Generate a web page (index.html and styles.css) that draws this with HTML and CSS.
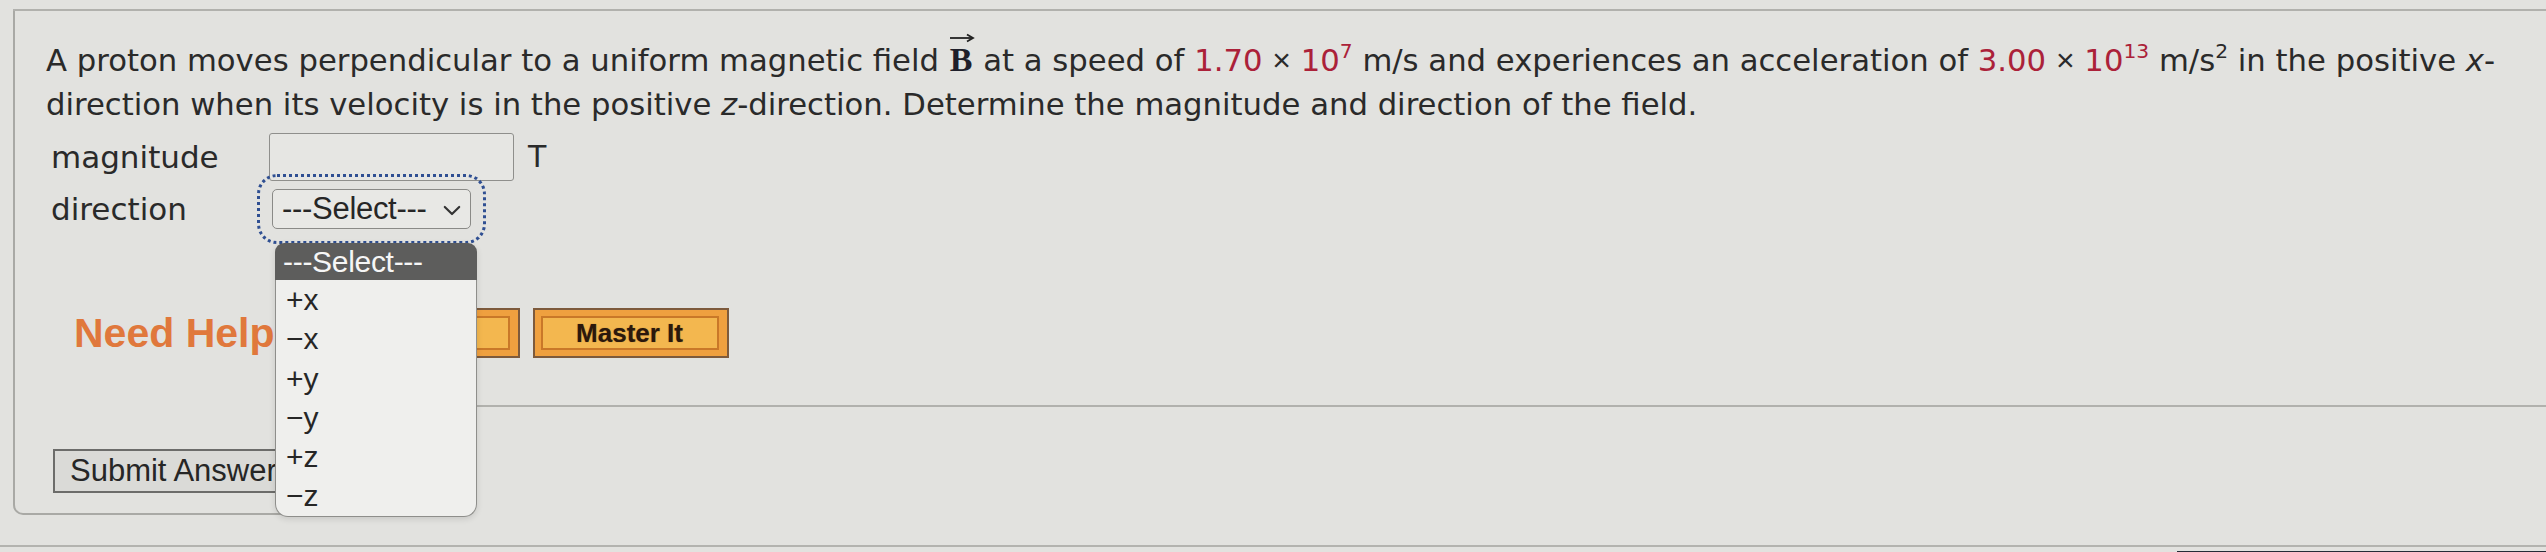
FILE: index.html
```html
<!DOCTYPE html>
<html lang="en">
<head>
<meta charset="utf-8">
<title>Proton in magnetic field</title>
<link rel="stylesheet" href="styles.css">
</head>
<body>
<div class="frame">
  <div class="upper">
    <p class="question">A proton moves perpendicular to a uniform magnetic field <span class="vec">B<svg class="vec-arrow" viewBox="0 0 26 10" width="26" height="10"><path d="M1 5 H23" stroke="#222" stroke-width="1.8" fill="none"/><path d="M18 1.5 L24 5 L18 8.5" stroke="#222" stroke-width="1.8" fill="none"/></svg></span> at a speed of <span class="num">1.70</span> <span class="times">×</span> <span class="num">10<sup>7</sup></span> m/s and experiences an acceleration of <span class="num">3.00</span> <span class="times">×</span> <span class="num">10<sup>13</sup></span> m/s<sup>2</sup> in the positive <i class="var">x</i>-<br>direction when its velocity is in the positive <i class="var">z</i>-direction. Determine the magnitude and direction of the field.</p>
    <div class="answers">
      <div class="label">magnitude</div>
      <div class="control">
        <div class="input-box"></div>
        <span class="unit">T</span>
      </div>
      <div class="label">direction</div>
      <div class="control">
        <div class="select-wrap">
          <div class="select-box">
            <span>---Select---</span>
            <svg class="chev" viewBox="0 0 20 12" width="18" height="11"><path d="M2 2 L10 10 L18 2" stroke="#333" stroke-width="2.4" fill="none" stroke-linecap="round" stroke-linejoin="round"/></svg>
          </div>
          <div class="dropdown">
            <div class="dd-head">---Select---</div>
            <ul class="dd-list">
              <li>+x</li>
              <li>−x</li>
              <li>+y</li>
              <li>−y</li>
              <li>+z</li>
              <li>−z</li>
            </ul>
          </div>
        </div>
      </div>
    </div>
    <div class="help-row">
      <span class="need-help">Need Help?</span>
      <button class="help-btn read-btn"><span class="help-inner">Read It</span></button>
      <button class="help-btn"><span class="help-inner">Master It</span></button>
    </div>
  </div>
  <div class="lower">
    <div class="lower-left">
      <button class="submit-btn">Submit Answer</button>
    </div>
    <div class="lower-right"></div>
  </div>
</div>
<div class="footer">
  <div class="strip"></div>
</div>
</body>
</html>
```

FILE: styles.css
```css
html, body {
  margin: 0;
  padding: 0;
}

body {
  background: #e2e2df;
  color: #2a2a2a;
  font-family: "DejaVu Sans", Verdana, sans-serif;
  font-size: 30.7px;
  width: 2546px;
  height: 552px;
  overflow: hidden;
}

.frame {
  margin: 9px 0 0 13px;
  border-top: 2px solid #b1b1ad;
}

.upper {
  border-left: 2px solid #a9a9a5;
  padding: 27px 0 47px 31px;
}

.question {
  margin: 0;
  line-height: 44px;
  white-space: nowrap;
}

.num {
  color: #ab2139;
}

.times {
  font-family: "Liberation Sans", Arial, sans-serif;
  font-size: 32px;
}

sup {
  font-size: 0.66em;
  line-height: 0;
  vertical-align: 0.62em;
}

.var {
  font-style: italic;
}

.vec {
  position: relative;
  display: inline-block;
  font-family: "Liberation Serif", "Times New Roman", serif;
  font-weight: bold;
  font-size: 34px;
  line-height: 30px;
  color: #1f1f2a;
  padding: 0 1px;
}

.vec-arrow {
  position: absolute;
  left: 0;
  top: -12px;
}

.answers {
  display: grid;
  grid-template-columns: 223px auto;
  row-gap: 8px;
  margin-top: 6px;
  align-items: center;
}

.label {
  padding-left: 5px;
  font-size: 31px;
}

.control {
  display: flex;
  align-items: center;
}

.input-box {
  width: 243px;
  height: 46px;
  border: 1.5px solid #8f8f8c;
  border-radius: 3px;
  background: #e6e6e3;
}

.unit {
  margin-left: 14px;
  font-size: 30px;
  margin-top: -2px;
}

.select-wrap {
  position: relative;
  margin-left: 3px;
}

.select-box {
  box-sizing: border-box;
  width: 199px;
  height: 40px;
  border: 1.5px solid #8a8a87;
  border-radius: 5px;
  background: #e8e8e5;
  display: flex;
  align-items: center;
  justify-content: space-between;
  padding: 0 9px 0 9px;
  font-family: "Liberation Sans", Arial, sans-serif;
  font-size: 31px;
  letter-spacing: -0.3px;
  color: #262626;
  outline: 3px dotted #2f4f92;
  outline-offset: 12px;
}

.chev {
  margin-top: 2px;
}

.dropdown {
  position: absolute;
  left: 3px;
  top: 54px;
  width: 202px;
  z-index: 5;
  font-family: "Liberation Sans", Arial, sans-serif;
  box-shadow: 0 2px 6px rgba(0, 0, 0, 0.12);
  border-radius: 9px 9px 13px 13px;
}

.dd-head {
  height: 37px;
  line-height: 37px;
  background: #5d5d5c;
  color: #f6f6f6;
  border-radius: 9px 9px 0 0;
  padding-left: 8px;
  font-size: 30px;
  letter-spacing: -0.3px;
}

.dd-list {
  list-style: none;
  margin: 0;
  padding: 0;
  background: #efefed;
  border: 1.5px solid #8e8e8b;
  border-top: none;
  border-radius: 0 0 13px 13px;
}

.dd-list li {
  height: 39.3px;
  line-height: 39.3px;
  padding-left: 10px;
  font-size: 30px;
  color: #262626;
}

.help-row {
  display: flex;
  align-items: center;
  margin-top: 79px;
  margin-left: 28px;
  height: 50px;
}

.need-help {
  font-family: "Liberation Sans", Arial, sans-serif;
  font-weight: bold;
  font-size: 41px;
  color: #e0783c;
}

.help-btn {
  box-sizing: border-box;
  height: 50px;
  width: 196px;
  padding: 6px 8px 6px 6px;
  border: 2px solid #7d5a3c;
  background: #efa03f;
  margin: 0 0 0 13px;
  display: flex;
}

.read-btn {
  width: 190px;
  margin-left: 30px;
}

.help-inner {
  flex: 1;
  display: flex;
  align-items: center;
  justify-content: center;
  border: 2px solid #c97828;
  background: #f3b74f;
  font-family: "Liberation Sans", Arial, sans-serif;
  font-weight: bold;
  font-size: 26px;
  color: #2b180c;
  text-shadow: 0 0 1px rgba(60, 30, 10, 0.5);
}

.lower {
  display: flex;
}

.lower-left {
  width: 455px;
  border-left: 2px solid #a9a9a5;
  border-bottom: 2px solid #a9a9a5;
  border-bottom-left-radius: 10px;
  padding: 44px 0 20px 38px;
  box-sizing: border-box;
}

.lower-right {
  flex: 1;
  border-top: 2px solid #b1b1ad;
}

.submit-btn {
  box-sizing: border-box;
  height: 44px;
  width: 250px;
  border: 2px solid #6c6c6a;
  background: #dadad7;
  font-family: "Liberation Sans", Arial, sans-serif;
  font-size: 31px;
  color: #262626;
  text-align: left;
  padding: 0 0 0 15px;
  line-height: 38px;
  display: block;
}

.footer {
  margin-top: 30px;
  border-top: 2px solid #b3b3af;
  display: flex;
  justify-content: flex-end;
}

.strip {
  width: 369px;
  height: 5px;
  margin-top: 4px;
  background: #262b36;
}
```
